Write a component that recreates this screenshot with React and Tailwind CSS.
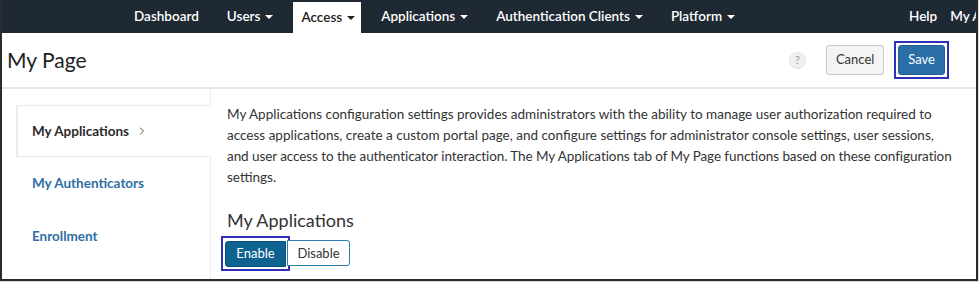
import { ChevronRight } from "lucide-react";

const NAV = [
  { label: "Dashboard" },
  { label: "Users", caret: true },
  { label: "Access", caret: true, active: true },
  { label: "Applications", caret: true },
  { label: "Authentication Clients", caret: true },
  { label: "Platform", caret: true },
];

function Caret({ dark }) {
  return (
    <svg width="8" height="4" viewBox="0 0 8 4" className="ml-[5px] mt-[1px]">
      <path d="M0 0h8L4 4z" fill={dark ? "#222" : "#fff"} />
    </svg>
  );
}

export default function App() {
  return (
    <div className="h-[282px] w-[979px] bg-[#d9d9d9] overflow-hidden" style={{ fontFamily: "Lato, 'Open Sans', sans-serif" }}>
      <div className="w-[978px] h-[281px] bg-white border-l-2 border-r-2 border-b-2 border-[#2b2b2b] flex flex-col">
        {/* Top nav */}
        <div className="h-[33px] bg-[#1e2934] flex items-stretch text-white text-[13.5px] font-semibold">
          <div className="flex items-stretch pl-[118px]">
            {NAV.map((n) => (
              <div
                key={n.label}
                className={`flex items-center ${n.active ? "bg-white text-[#222] mt-[2px] mx-[6px] pl-[8px] pr-[6px]" : "px-[14px]"}`}
              >
                <span>{n.label}</span>
                {n.caret && <Caret dark={n.active} />}
              </div>
            ))}
          </div>
          <div className="ml-auto w-[67px] overflow-hidden whitespace-nowrap flex items-center gap-[13px]">
            <span>Help</span>
            <span>My Account</span>
          </div>
        </div>

        {/* Page header */}
        <div className="h-[56px] flex items-center border-b-2 border-[#e6e6e6] pl-[5px] pr-[27px]">
          <h1 className="text-[21px] text-[#222] font-normal">My Page</h1>
          <div className="ml-auto flex items-center">
            <span className="w-[17px] h-[17px] rounded-full bg-[#f0f0f0] border border-[#e2e2e2] text-[#999] text-[11px] flex items-center justify-center mr-[20px]">
              ?
            </span>
            <button className="h-[30px] px-[9px] rounded-[3px] border border-[#c9c9c9] bg-[#f4f4f4] text-[#333] text-[13px] mr-[10px]">
              Cancel
            </button>
            <div className="p-[2px] border-2 border-[#2f2fb8]">
              <button className="h-[30px] px-[9px] rounded-[3px] bg-[#2a6ea8] border border-[#245f92] text-white text-[13px]">
                Save
              </button>
            </div>
          </div>
        </div>

        {/* Body */}
        <div className="flex flex-1">
          <div className="w-[209px] flex flex-col">
            <div className="h-[16px] border-r border-[#ececec]" />
            <div className="ml-[14px] h-[52px] border-l-2 border-[#2d6a9f] border-t border-b border-[#ececec] flex items-center pl-[14px] text-[13.5px] font-bold text-[#2b2b2b]">
              My Applications
              <ChevronRight size={12} strokeWidth={2} className="ml-[7px] text-[#555]" />
            </div>
            <div className="flex-1 border-r border-[#ececec] flex flex-col pl-[30px]">
              <div className="h-[53px] flex items-center text-[13.5px] font-bold text-[#2e6ea6]">My Authenticators</div>
              <div className="h-[53px] flex items-center text-[13.5px] font-bold text-[#2e6ea6]">Enrollment</div>
            </div>
          </div>
          <div className="flex-1 pl-[16px] pr-[10px] pt-[15px]">
            <p className="text-[13.5px] leading-[21px] text-[#333]">
              My Applications configuration settings provides administrators with the ability to manage user authorization required to
              <br />
              access applications, create a custom portal page, and configure settings for administrator console settings, user sessions,
              <br />
              <span className="tracking-[-0.08px]">
                and user access to the authenticator interaction. The My Applications tab of My Page functions based on these configuration
              </span>
              <br />
              settings.
            </p>
            <h2 className="text-[18px] text-[#333] mt-[20px] leading-[24px]">My Applications</h2>
            <div className="flex items-center mt-[4px] -ml-[6px]">
              <div className="p-[2px] border-2 border-[#2f2fb8]">
                <button className="h-[26px] w-[61px] rounded-l-[3px] bg-[#0d6290] border border-[#0a5078] text-white text-[13px]">
                  Enable
                </button>
              </div>
              <button className="h-[26px] w-[63px] -ml-[3px] rounded-r-[3px] bg-white border border-[#2b7cb0] text-[#333] text-[13px]">
                Disable
              </button>
            </div>
          </div>
        </div>
      </div>
    </div>
  );
}
